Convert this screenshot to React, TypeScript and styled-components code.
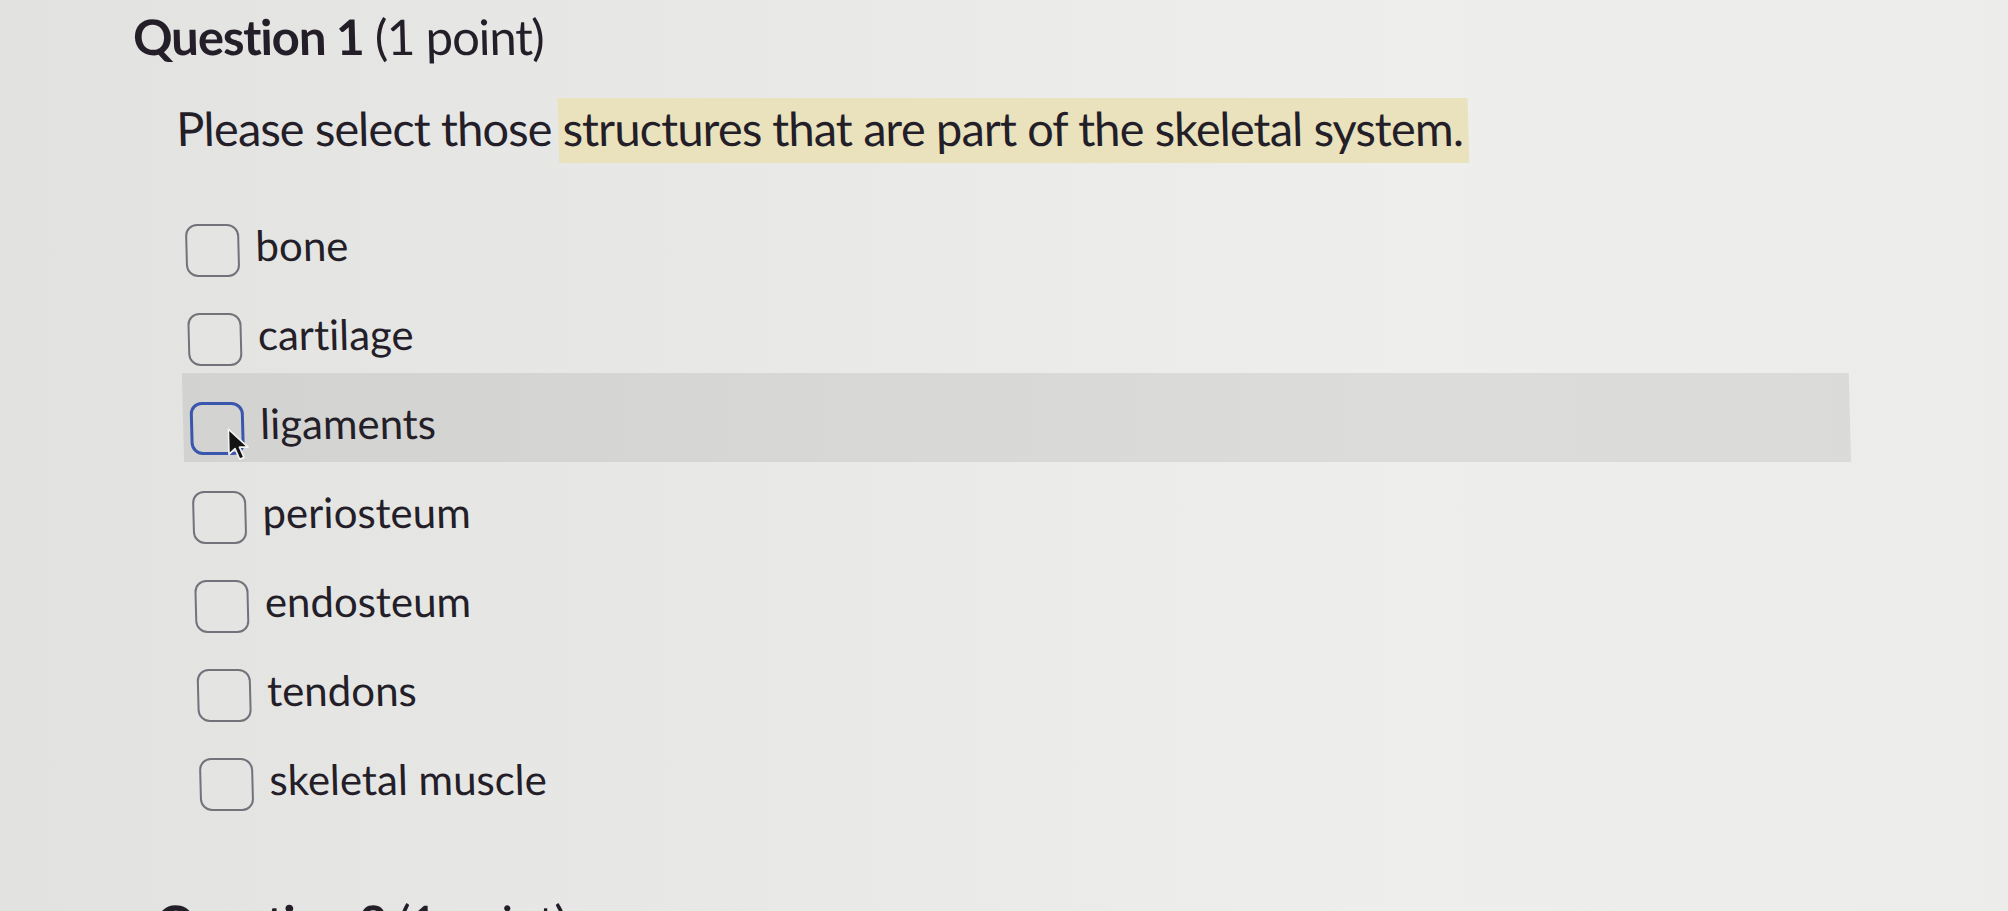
import React from 'react';
import styled, { createGlobalStyle } from 'styled-components';

const GlobalStyle = createGlobalStyle`
  html, body {
    margin: 0;
    height: 911px;
    overflow: hidden;
  }

  body {
    background: linear-gradient(90deg, #e2e2e0 0%, #e8e8e6 35%, #eeeeec 70%, #ececea 100%);
    font-family: Lato, "Open Sans", sans-serif;
    font-variant-ligatures: none;
    color: #241e29;
  }
`;

type Option = {
    label: string;
    hovered?: boolean;
};

const options: Option[] = [
    { label: 'bone' },
    { label: 'cartilage' },
    { label: 'ligaments', hovered: true },
    { label: 'periosteum' },
    { label: 'endosteum' },
    { label: 'tendons' },
    { label: 'skeletal muscle' },
];

export default function App() {
    return (
        <>
            <GlobalStyle />
            <Page>
                <Question>
                    <Title>
                        <strong>Question 1</strong> (1 point)
                    </Title>
                    <Prompt>
                        Please select those <Mark>structures that are part of the skeletal system.</Mark>
                    </Prompt>
                    <OptionList>
                        {options.map((option) => (
                            <OptionRow key={option.label} $hovered={!!option.hovered}>
                                <Checkbox $focused={!!option.hovered} />
                                <OptionLabel>{option.label}</OptionLabel>
                                {option.hovered && (
                                    <Pointer viewBox="0 0 20 30" aria-hidden>
                                        <path
                                            d="M1 1 L1 24 L6.6 18.8 L10.6 28.4 L14.6 26.7 L10.7 17.4 L18.4 17.4 Z"
                                            fill="#141414"
                                            stroke="#f4f4f4"
                                            strokeWidth="1.5"
                                            strokeLinejoin="round"
                                        />
                                    </Pointer>
                                )}
                            </OptionRow>
                        ))}
                    </OptionList>
                </Question>
                <Title>
                    <strong>Question 2</strong> (1 point)
                </Title>
            </Page>
        </>
    );
}

const Page = styled.main`
  padding: 7px 0 0 132px;
  transform: skewX(1.5deg);
  transform-origin: 0 0;
`;

const Question = styled.section`
  display: flex;
  flex-direction: column;
  margin-bottom: 75px;
`;

const Title = styled.h2`
  margin: 0;
  font-size: 49px;
  line-height: 1.2;
  font-weight: 400;
  letter-spacing: -1.1px;

  strong {
    font-weight: 700;
  }
`;

const Prompt = styled.p`
  margin: 34px 0 0 41px;
  font-size: 47px;
  line-height: 1.2;
  letter-spacing: -0.88px;
`;

const Mark = styled.span`
  background: #e9e2bd;
  padding: 2px 6px 7px 4px;
  margin-left: -4px;
`;

const OptionList = styled.div`
  display: flex;
  flex-direction: column;
  margin: 39px 0 0 40px;
`;

const OptionRow = styled.label<{ $hovered: boolean }>`
  position: relative;
  display: flex;
  align-items: flex-start;
  gap: 16px;
  width: 1667px;
  height: 89px;
  box-sizing: border-box;
  padding: 29px 0 0 7px;
  background: ${({ $hovered }) => ($hovered ? 'rgba(0, 0, 0, 0.075)' : 'transparent')};
`;

const Checkbox = styled.span<{ $focused: boolean }>`
  flex: none;
  width: 54px;
  height: 53px;
  box-sizing: border-box;
  border-radius: 12px;
  border: ${({ $focused }) => ($focused ? '3px solid #3a56ad' : '2.5px solid #75717a')};
`;

const OptionLabel = styled.span`
  font-size: 42px;
  line-height: 1.2;
  margin-top: -4px;
`;

const Pointer = styled.svg`
  position: absolute;
  left: 44px;
  top: 55px;
  width: 22px;
  height: 33px;
`;
